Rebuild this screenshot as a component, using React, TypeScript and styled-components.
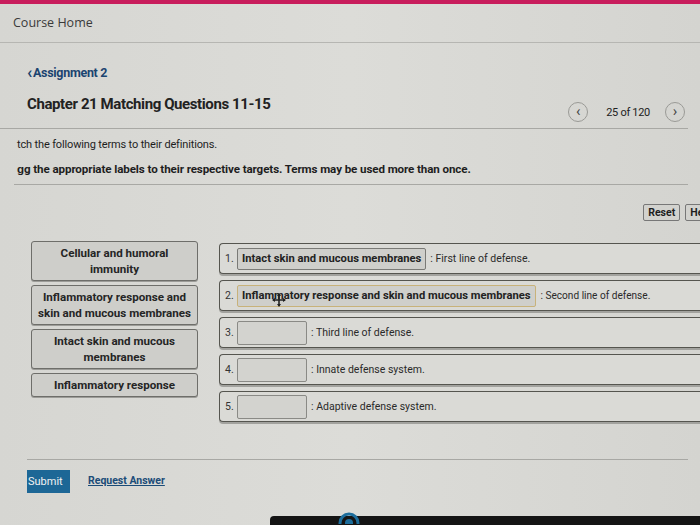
import styled, { createGlobalStyle } from 'styled-components';

const GlobalStyle = createGlobalStyle`
  html, body {
    margin: 0;
    padding: 0;
    background: #d8d8d4;
  }
  body {
    font-family: Roboto, "Liberation Sans", Arial, sans-serif;
    color: #1e1e1e;
  }
`;

const labels = [
  ['Cellular and humoral', 'immunity'],
  ['Inflammatory response and', 'skin and mucous membranes'],
  ['Intact skin and mucous', 'membranes'],
  ['Inflammatory response'],
];

const targets = [
  { answer: 'Intact skin and mucous membranes', text: 'First line of defense.' },
  { answer: 'Inflammatory response and skin and mucous membranes', text: 'Second line of defense.', hover: true },
  { answer: '', text: 'Third line of defense.' },
  { answer: '', text: 'Innate defense system.' },
  { answer: '', text: 'Adaptive defense system.' },
];

const MoveCursor = () => (
  <svg width="14" height="14" viewBox="0 0 14 14">
    <path d="M7 1 L7 13 M1 7 L13 7" stroke="#222" strokeWidth="1.6" />
    <path d="M7 0 L5 3 L9 3 Z M7 14 L5 11 L9 11 Z M0 7 L3 5 L3 9 Z M14 7 L11 5 L11 9 Z" fill="#222" />
  </svg>
);

const App = () => {
  return (
    <Page>
      <GlobalStyle />
      <TopBar>
        <CourseHome>Course Home</CourseHome>
      </TopBar>
      <Main>
        <BackLink>
          <span>‹</span>Assignment 2
        </BackLink>
        <TitleRow>
          <Title>Chapter 21 Matching Questions 11-15</Title>
          <Pager>
            <PagerButton>‹</PagerButton>
            <PagerText>25 of 120</PagerText>
            <PagerButton>›</PagerButton>
          </Pager>
        </TitleRow>
      </Main>
      <Divider />
      <Instructions>
        <p>tch the following terms to their definitions.</p>
        <Strong>ɡg the appropriate labels to their respective targets. Terms may be used more than once.</Strong>
      </Instructions>
      <Divider $inset={14} />
      <Toolbar>
        <ToolButton>Reset</ToolButton>
        <ToolButton>Help</ToolButton>
      </Toolbar>
      <Matching>
        <LabelColumn>
          {labels.map((lines) => (
            <Label key={lines.join(' ')} $single={lines.length === 1}>
              {lines.map((line) => (
                <div key={line}>{line}</div>
              ))}
            </Label>
          ))}
        </LabelColumn>
        <TargetColumn>
          {targets.map((t, i) => (
            <TargetRow key={t.text}>
              <Num>{i + 1}.</Num>
              {t.answer ? (
                <Filled $hover={t.hover}>
                  {t.answer}
                  {t.hover && (
                    <Cursor>
                      <MoveCursor />
                    </Cursor>
                  )}
                </Filled>
              ) : (
                <Empty />
              )}
              <Definition $small={t.hover}>: {t.text}</Definition>
            </TargetRow>
          ))}
        </TargetColumn>
      </Matching>
      <Divider $inset={27} $gap={37} />
      <Footer>
        <SubmitButton>Submit</SubmitButton>
        <RequestLink>Request Answer</RequestLink>
      </Footer>
      <Bezel>
        <Logo>
          <svg width="22" height="12" viewBox="0 0 22 12">
            <circle cx="11" cy="11" r="9" fill="none" stroke="#1c6d9c" strokeWidth="3" />
            <circle cx="11" cy="11" r="4" fill="#1c6d9c" />
          </svg>
        </Logo>
      </Bezel>
    </Page>
  );
};

export default App;

const Page = styled.div`
  width: 700px;
  height: 525px;
  overflow: hidden;
  display: flex;
  flex-direction: column;
  background: linear-gradient(90deg, #d6d6d2 0%, #dcdcd8 50%, #d4d4d0 100%);
`;

const TopBar = styled.div`
  border-top: 4px solid #c81d5c;
  border-bottom: 1px solid #b6b6b2;
  margin-right: -10px;
  padding: 10px 13px 10px;
`;

const CourseHome = styled.div`
  font-family: "Open Sans", sans-serif;
  font-size: 12.5px;
  line-height: 18px;
  color: #3a3a3a;
`;

const Main = styled.div`
  padding: 21px 20px 0 27px;
`;

const BackLink = styled.div`
  font-size: 12.5px;
  font-weight: 700;
  line-height: 16px;
  color: #1b4470;
  letter-spacing: -0.3px;
  span {
    font-size: 17px;
    margin-right: 1px;
    vertical-align: -1px;
  }
`;

const TitleRow = styled.div`
  display: flex;
  align-items: flex-start;
  justify-content: space-between;
  margin-top: 13px;
  padding-bottom: 6px;
`;

const Title = styled.div`
  font-size: 15px;
  font-weight: 700;
  line-height: 20px;
  letter-spacing: -0.4px;
  color: #222;
`;

const Pager = styled.div`
  display: flex;
  align-items: center;
  margin-top: 8px;
  margin-right: -5px;
`;

const PagerButton = styled.div`
  width: 20px;
  height: 20px;
  border: 1px solid #9a9a96;
  border-radius: 50%;
  display: flex;
  align-items: center;
  justify-content: center;
  font-size: 15px;
  line-height: 1;
  color: #444;
  padding-bottom: 2px;
  box-sizing: border-box;
`;

const PagerText = styled.div`
  font-size: 11px;
  letter-spacing: -0.3px;
  color: #222;
  margin: 0 15px 0 18px;
`;

const Divider = styled.div<{ $inset?: number; $gap?: number }>`
  height: 1px;
  background: #a8a8a4;
  margin-left: ${({ $inset }) => `${$inset ?? 0}px`};
  margin-top: ${({ $gap }) => `${$gap ?? 0}px`};
  margin-right: 12px;
`;

const Instructions = styled.div`
  padding: 8px 0 7px 17px;
  font-size: 11px;
  letter-spacing: -0.15px;
  p {
    margin: 0;
    line-height: 15px;
  }
`;

const Strong = styled.p`
  font-weight: 700;
  font-size: 11.6px;
  letter-spacing: -0.1px;
  margin-top: 10px !important;
`;

const Toolbar = styled.div`
  display: flex;
  justify-content: flex-end;
  gap: 5px;
  margin-top: 19px;
  margin-right: -17px;
`;

const ToolButton = styled.div`
  height: 17px;
  padding: 0 4px;
  border: 1px solid #777;
  border-radius: 2px;
  background: #d2d2ce;
  font-size: 10.5px;
  font-weight: 700;
  line-height: 15px;
  box-sizing: border-box;
`;

const Matching = styled.div`
  display: grid;
  grid-template-columns: 167px 1fr;
  column-gap: 21px;
  margin-top: 20px;
  padding-left: 31px;
  margin-right: -10px;
`;

const LabelColumn = styled.div`
  display: flex;
  flex-direction: column;
  gap: 4px;
`;

const Label = styled.div<{ $single?: boolean }>`
  border: 1px solid #6e6e6a;
  border-radius: 3px;
  background: #cececa;
  box-shadow: 0 1px 0 #9c9c98;
  font-size: 11.6px;
  font-weight: 700;
  line-height: 16px;
  text-align: center;
  color: #252525;
  white-space: nowrap;
  padding: 3px 2px;
`;

const TargetColumn = styled.div`
  display: flex;
  flex-direction: column;
  gap: 6px;
  padding-top: 2px;
`;

const TargetRow = styled.div`
  height: 31px;
  box-sizing: border-box;
  display: flex;
  align-items: center;
  padding-left: 5px;
  border: 1px solid #55554f;
  border-right: none;
  border-radius: 4px 0 0 4px;
  box-shadow: 0 2px 0 #a2a29e;
  background: #dadad6;
`;

const Num = styled.span`
  font-size: 10.5px;
  color: #333;
  width: 12px;
`;

const Filled = styled.div<{ $hover?: boolean }>`
  position: relative;
  height: 22px;
  box-sizing: border-box;
  padding: 0 4px;
  border: 1px solid ${({ $hover }) => ($hover ? '#c8b27a' : '#7a7a76')};
  border-radius: 2px;
  background: #cfcfcb;
  font-size: 11.2px;
  font-weight: 700;
  line-height: 20px;
  color: #222;
  white-space: nowrap;
`;

const Cursor = styled.span`
  position: absolute;
  left: 34px;
  top: 7px;
  line-height: 0;
`;

const Empty = styled.div`
  width: 70px;
  height: 24px;
  box-sizing: border-box;
  border: 1px solid #8a8a86;
  border-radius: 2px;
  background: #d3d3cf;
`;

const Definition = styled.span<{ $small?: boolean }>`
  margin-left: ${({ $small }) => ($small ? '5px' : '4px')};
  font-size: ${({ $small }) => ($small ? '10.1px' : '10.5px')};
  color: #2a2a2a;
  white-space: nowrap;
`;

const Footer = styled.div`
  display: flex;
  align-items: center;
  gap: 18px;
  padding: 10px 0 0 27px;
`;

const SubmitButton = styled.div`
  width: 43px;
  height: 23px;
  padding-left: 1px;
  box-sizing: border-box;
  background: #1d6796;
  color: #f2f2f2;
  font-size: 11px;
  line-height: 23px;
  white-space: nowrap;
`;

const RequestLink = styled.span`
  font-size: 10.5px;
  font-weight: 700;
  color: #1b4c78;
  text-decoration: underline;
  margin-top: -3px;
`;

const Bezel = styled.div`
  position: relative;
  margin-top: auto;
  height: 9px;
  background: #141414;
  margin-left: 270px;
  border-top-left-radius: 4px;
`;

const Logo = styled.div`
  position: absolute;
  left: 68px;
  top: -4px;
  line-height: 0;
`;
